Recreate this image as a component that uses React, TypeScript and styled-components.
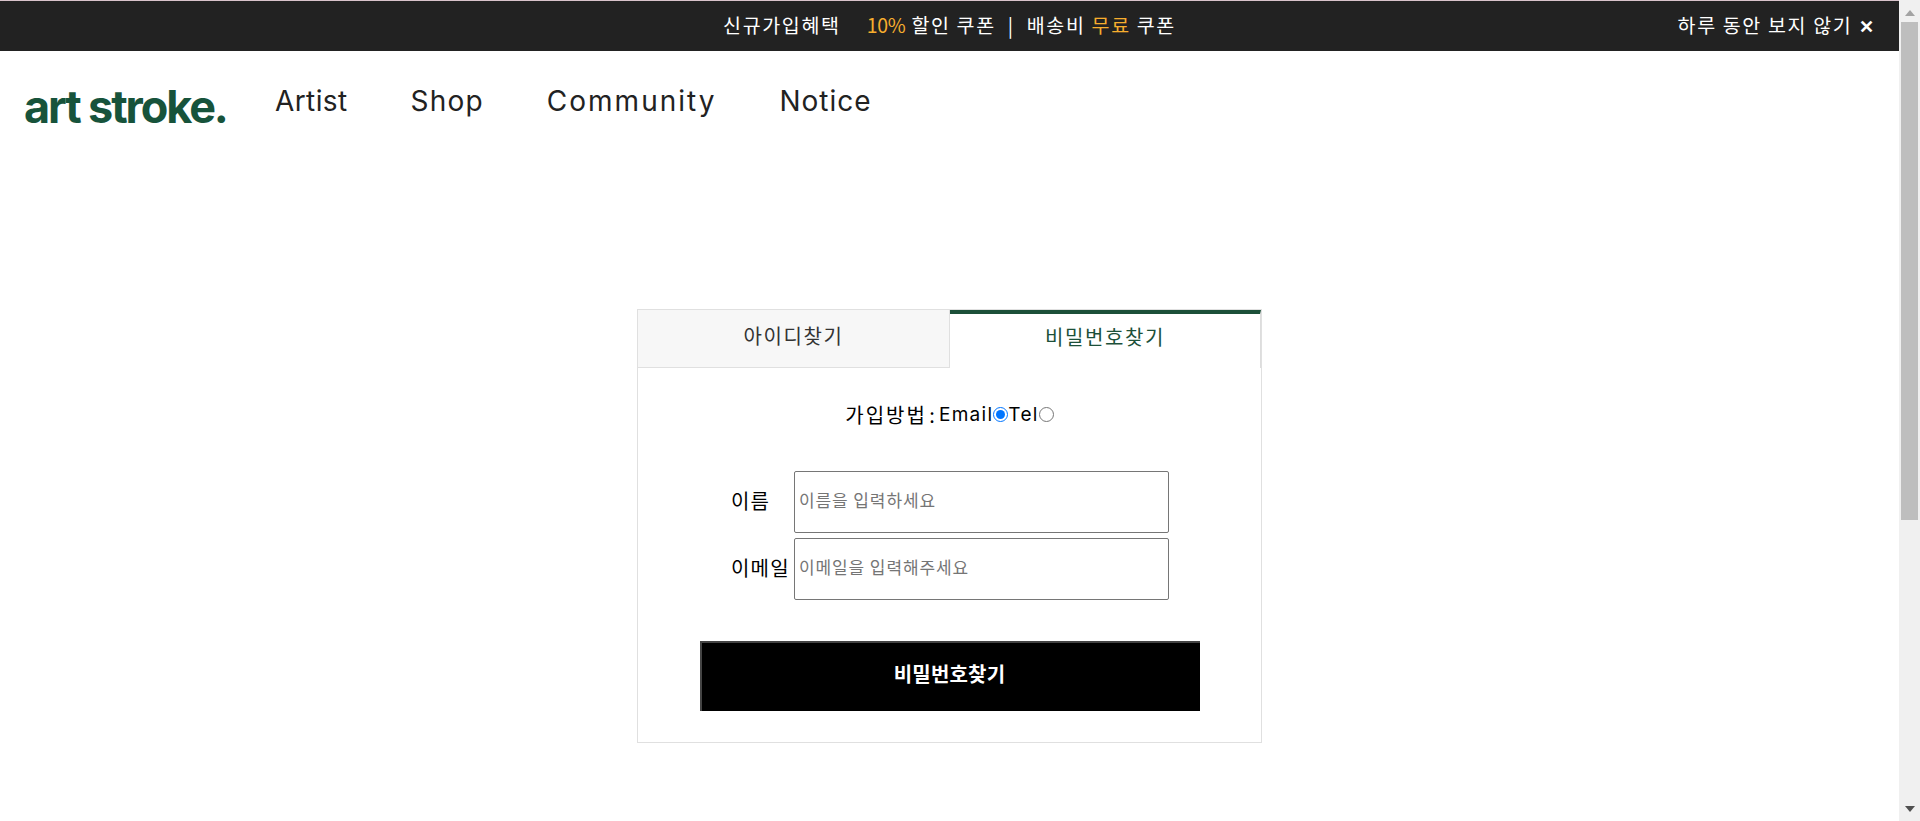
import React from "react";
import styled, { createGlobalStyle } from "styled-components";

const Global = createGlobalStyle`
  html, body { margin: 0; padding: 0; height: 100%; overflow: hidden; background: #fff; }
  body { font-family: "Noto Sans CJK KR", "Liberation Sans", sans-serif; color: #000; }
  * { box-sizing: border-box; }
`;
const Frame = styled.div`display: flex; height: 821px; width: 1920px; overflow: hidden;`;
const Page = styled.div`flex: 1; min-width: 0; display: flex; flex-direction: column;`;
const TopLine = styled.div`height: 1px; background: #d9c3cb;`;
const Banner = styled.div`
  height: 50px; background: #222; color: #fff; display: grid; grid-template-columns: minmax(0, 1fr) auto minmax(0, 1fr);
  align-items: center; font-size: 19.5px; letter-spacing: 1.65px; padding: 0 0 4px; white-space: pre;
`;
const Center = styled.div`grid-column: 2;`;
const Accent = styled.span`color: #f7ae2e;`;
const Percent = styled(Accent)`letter-spacing: -0.3px; margin-left: 2px;`;
const Dismiss = styled.div`grid-column: 3; justify-self: end; margin-right: 23px;`;
const CloseMark = styled.b`font-family: "Liberation Sans", sans-serif; margin-left: 7px; font-size: 18px;`;
const Header = styled.header`height: 79px; display: flex; align-items: flex-start; padding: 0 0 0 24px;`;
const Logo = styled.div`
  font-family: Inter, sans-serif; font-weight: 700; font-size: 45px; letter-spacing: -2.1px; color: #17533b;
  line-height: 50px; margin-top: 31px; width: 251px; white-space: nowrap;
`;
const Nav = styled.nav`display: flex; gap: 63px; margin-top: 30px;`;
const NavItem = styled.a<{ $spacing: number }>`
  font-family: Inter, sans-serif; font-size: 28px; line-height: 40px; color: #222; letter-spacing: ${p => p.$spacing}px;
`;
const Main = styled.main`display: flex; justify-content: center; padding-top: 179px;`;
const Card = styled.section`width: 625px; height: 434px; border: 1px solid #e0e0e0;`;
const Tabs = styled.div`display: grid; grid-template-columns: 312px 311px; height: 58px;`;
const Tab = styled.div<{ $active?: boolean }>`
  display: flex; align-items: center; justify-content: center; font-size: 20px; letter-spacing: 1.6px;
  background: ${p => (p.$active ? "#fff" : "#f7f7f7")};
  color: ${p => (p.$active ? "#1c5039" : "#333")};
  border-top: ${p => (p.$active ? "4px solid #1c5039" : "0")};
  border-right: ${p => (p.$active ? "1px solid #ddd" : "1px solid #e0e0e0")};
  border-bottom: ${p => (p.$active ? "0" : "1px solid #e0e0e0")};
  padding-bottom: ${p => (p.$active ? "10px" : "6px")};
`;
const Method = styled.div`
  display: flex; justify-content: center; align-items: center; height: 24px; margin-top: 34px;
  font-size: 20px; white-space: pre;
`;
const MethodLabel = styled.span`letter-spacing: 2px; word-spacing: -4px;`;
const Latin = styled.span`font-family: Inter, sans-serif; font-size: 19px; letter-spacing: 1.3px;`;
const Email = styled(Latin)`margin-left: 2px;`;
const Radio = styled.input`margin: 0; width: 15px; height: 15px;`;
const Fields = styled.div`display: flex; flex-direction: column; gap: 5px; margin: 45px 0 0 93px;`;
const Row = styled.label`display: flex; align-items: center; height: 62px;`;
const FieldName = styled.span`width: 63px; font-size: 20px; letter-spacing: 1.2px; padding-bottom: 4px; white-space: nowrap;`;
const Field = styled.input`
  width: 375px; height: 62px; border: 1px solid #767676; border-radius: 2px; padding: 0 4px; font: inherit; font-size: 17px;
  letter-spacing: 0.9px; padding-bottom: 5px; outline: none;
  &::placeholder { color: #757575; opacity: 1; }
`;
const Submit = styled.button`
  display: block; width: 500px; height: 70px; margin: 41px 0 0 62px; background: #000; color: #fff;
  border: 0; border-top: 2px solid #444; border-left: 2px solid #444; font: inherit; font-size: 20px; font-weight: 700;
  letter-spacing: 0.2px; padding: 0 3px 8px 0;
`;
const Scrollbar = styled.aside`
  width: 21px; background: #f0f0f0; display: flex; flex-direction: column; align-items: center; padding: 1px 0 0;
`;
const Arrow = styled.svg`width: 10px; height: 6px; margin: 9px 0 0; fill: #a3a3a3; flex: none;`;
const Thumb = styled.div`width: 17px; height: 498px; background: #bebebe; margin-top: 6px;`;
const Spacer = styled.div`flex: 1;`;
const ArrowDown = styled.svg`width: 10px; height: 6px; margin-bottom: 9px; fill: #505050; flex: none;`;

export default function App() {
  return (
    <Frame>
      <Global />
      <Page>
        <TopLine />
        <Banner>
          <Center>
            {"신규가입혜택    "}<Percent>10%</Percent>{" 할인 쿠폰  |  배송비 "}<Accent>무료</Accent>{" 쿠폰"}
          </Center>
          <Dismiss>하루 동안 보지 않기<CloseMark>✕</CloseMark></Dismiss>
        </Banner>
        <Header>
          <Logo>art stroke.</Logo>
          <Nav>
            <NavItem $spacing={0.4}>Artist</NavItem>
            <NavItem $spacing={1.2}>Shop</NavItem>
            <NavItem $spacing={2}>Community</NavItem>
            <NavItem $spacing={1}>Notice</NavItem>
          </Nav>
        </Header>
        <Main>
          <Card>
            <Tabs>
              <Tab>아이디찾기</Tab>
              <Tab $active>비밀번호찾기</Tab>
            </Tabs>
            <Method>
              <MethodLabel>가입방법 :</MethodLabel>
              <Email>Email</Email><Radio type="radio" name="m" defaultChecked />
              <Latin>Tel</Latin><Radio type="radio" name="m" />
            </Method>
            <Fields>
              <Row><FieldName>이름</FieldName><Field placeholder="이름을 입력하세요" /></Row>
              <Row><FieldName>이메일</FieldName><Field placeholder="이메일을 입력해주세요" /></Row>
            </Fields>
            <Submit>비밀번호찾기</Submit>
          </Card>
        </Main>
      </Page>
      <Scrollbar>
        <Arrow viewBox="0 0 10 6"><path d="M5 0 10 6H0z" /></Arrow>
        <Thumb />
        <Spacer />
        <ArrowDown viewBox="0 0 10 6"><path d="M0 0H10L5 6z" /></ArrowDown>
      </Scrollbar>
    </Frame>
  );
}
